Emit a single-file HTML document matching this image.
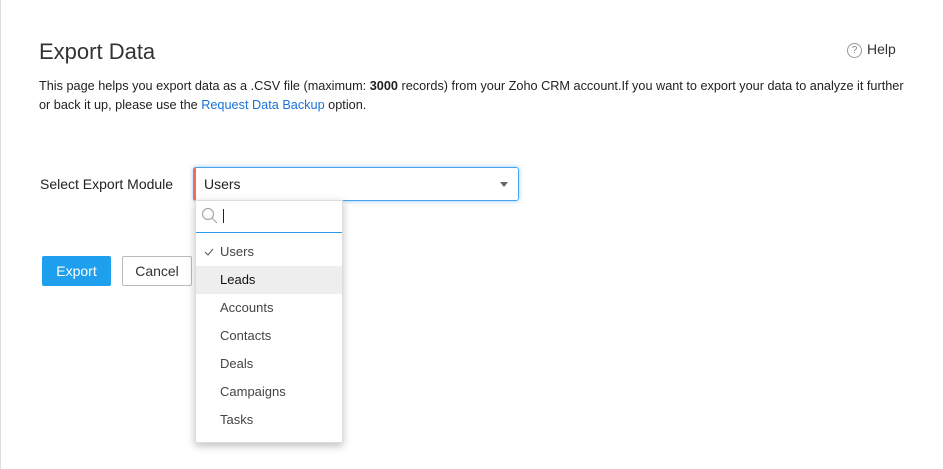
<!DOCTYPE html>
<html><head><style>
body{margin:0;width:943px;height:469px;background:#fff;font-family:"Liberation Sans",sans-serif;color:#222;position:relative;overflow:hidden}
.lb{position:absolute;left:0;top:0;width:1px;height:469px;background:#ddd}
h1{position:absolute;left:39px;top:39px;margin:0;font-weight:normal;font-size:22px;color:#333}
.help{position:absolute;left:847px;top:41px;font-size:14px;color:#333}
.help span{display:inline-block;width:13px;height:13px;border:1px solid #999;border-radius:50%;font-size:10px;text-align:center;line-height:13px;color:#888;margin-right:5px;vertical-align:1px}
.p{position:absolute;left:39px;top:77px;font-size:12.7px;line-height:19px;width:872px;color:#222}
.p a{color:#1a73d9;text-decoration:none}
.lbl{position:absolute;left:40px;top:176px;font-size:14px}
.sel{position:absolute;left:193px;top:167px;width:326px;height:34px;border:1px solid #4aa3f0;border-radius:3px;box-shadow:0 0 4px rgba(70,160,240,.6);box-sizing:border-box}
.sel:before{content:"";position:absolute;left:-1px;top:-1px;bottom:-1px;width:3px;background:#f06a6a;border-radius:3px 0 0 3px}
.sel .t{position:absolute;left:10px;top:8px;font-size:14px}
.sel .ar{position:absolute;right:10px;top:14px;border:4px solid transparent;border-top:5px solid #666;border-bottom:0}
.btn{position:absolute;top:256px;height:30px;box-sizing:border-box;border-radius:2px;font-size:14px;text-align:center;line-height:28px}
.ex{left:42px;width:69px;background:#1fa0ef;color:#fff;border:1px solid #1fa0ef}
.cn{left:122px;width:70px;border:1px solid #bbb;color:#333}
.dd{position:absolute;left:195px;top:200px;width:148px;height:243px;background:#fff;border:1px solid #ddd;box-sizing:border-box;box-shadow:0 3px 8px rgba(0,0,0,.25)}
.sr{height:31px;border-bottom:1px solid #2d9be8;position:relative}
.cur{position:absolute;left:27px;top:8px;width:1px;height:14px;background:#222}
.it{position:absolute;left:0;width:146px;height:28px;line-height:28px;font-size:13px;color:#444;padding-left:24px;box-sizing:border-box}
</style></head><body>
<div class="lb"></div>
<h1>Export Data</h1>
<div class="help"><span>?</span>Help</div>
<div class="p">This page helps you export data as a .CSV file (maximum: <b>3000</b> records) from your Zoho CRM account.If you want to export your data to analyze it further<br>or back it up, please use the <a>Request Data Backup</a> option.</div>
<div class="lbl">Select Export Module</div>
<div class="sel"><div class="t">Users</div><div class="ar"></div></div>
<div class="btn ex">Export</div>
<div class="btn cn">Cancel</div>
<div class="dd">
<div class="sr"><svg style="position:absolute;left:5px;top:6px" width="18" height="18" viewBox="0 0 18 18"><circle cx="7" cy="7" r="5.5" fill="none" stroke="#aaa" stroke-width="1.2"/><path d="M11 11l5 5" stroke="#aaa" stroke-width="1.2"/></svg><div class="cur"></div></div>
<div class="it" style="top:37px"><svg style="position:absolute;left:8px;top:10px" width="10" height="8" viewBox="0 0 10 8"><path d="M1 4l3 3 5-6" fill="none" stroke="#555" stroke-width="1"/></svg>Users</div>
<div class="it" style="top:65px;background:#eee;color:#111">Leads</div>
<div class="it" style="top:93px">Accounts</div>
<div class="it" style="top:121px">Contacts</div>
<div class="it" style="top:149px">Deals</div>
<div class="it" style="top:177px">Campaigns</div>
<div class="it" style="top:205px">Tasks</div>
</div>
</body></html>
